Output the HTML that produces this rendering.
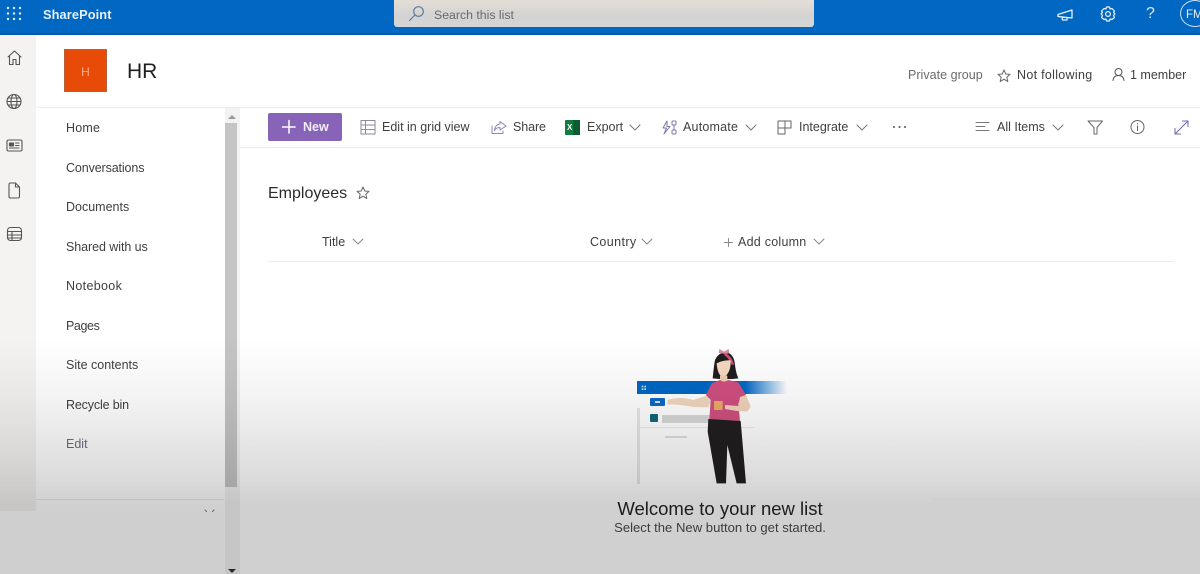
<!DOCTYPE html>
<html><head><meta charset="utf-8">
<style>
html,body{margin:0;padding:0;width:1200px;height:574px;overflow:hidden;background:#fff}
body{position:relative;font-family:"Liberation Sans",sans-serif;color:#3f3f3f;filter:blur(.35px)}
.t{position:absolute;white-space:nowrap;font-size:12.5px;line-height:16px}
.b{position:absolute}
svg{position:absolute;overflow:visible;fill:none;stroke-linecap:round;stroke-linejoin:round}
</style></head>
<body>
<div class="b" style="left:0;top:0;width:1200px;height:34px;background:#0067c2"></div>
<div class="b" style="left:0;top:33px;width:1200px;height:2px;background:#0058a8"></div>
<svg style="left:0;top:0" width="30" height="30" stroke="none"><g fill="#e4eefa"><circle cx="8" cy="8" r="1.2"/><circle cx="14" cy="8" r="1.2"/><circle cx="20" cy="8" r="1.2"/><circle cx="8" cy="13.500" r="1.2"/><circle cx="14" cy="13.500" r="1.2"/><circle cx="20" cy="13.500" r="1.2"/><circle cx="8" cy="19" r="1.200"/><circle cx="14" cy="19" r="1.200"/><circle cx="20" cy="19" r="1.200"/></g></svg>
<div class="t" style="left:43px;top:7px;color:#e8f1fb;font-weight:bold;font-size:12.800px;letter-spacing:.1px">SharePoint</div>
<div class="b" style="left:394px;top:0;width:420px;height:27px;background:linear-gradient(#e4ddd6,#d3d3d3 60%,#d6d6d6);border-radius:0 0 3px 3px"></div>
<svg style="left:408px;top:5px" width="18" height="18" stroke="#5b7f9f" stroke-width="1.200"><circle cx="10.500" cy="6.500" r="4.800"/><path d="M7 10 L1.500 15.500"/></svg>
<div class="t" style="left:434px;top:7px;color:#6a6a6a;font-size:12.300px">Search this list</div>
<svg style="left:1056px;top:6px" width="20" height="18" stroke="#e8f1fb" stroke-width="1.300"><path d="M2 8.500 L16 4 V12 L2 10.500Z M6 11 L6.500 14 H11 V12"/></svg>
<svg style="left:1100px;top:6px" width="16" height="16" stroke="#e8f1fb" stroke-width="1.200"><circle cx="8" cy="8" r="2.400"/><path d="M6.500 1 H9.500 L10 3 L12 2.500 L14.500 5 L13.500 6.500 L15 8 L13.500 9.500 L14.500 11.500 L12 13.500 L10 13 L9.500 15 H6.500 L6 13 L4 13.500 L1.500 11.500 L2.500 9.500 L1 8 L2.500 6.500 L1.500 5 L4 2.500 L6 3Z"/></svg>
<div class="t" style="left:1146px;top:4px;color:#dbe8f6;font-size:16px;line-height:20px">?</div>
<div class="b" style="left:1180px;top:0;width:30px;height:27px;border:1px solid #cfe1f4;border-radius:50%;box-sizing:border-box"></div>
<div class="t" style="left:1186px;top:7px;color:#e8f1fb;font-size:11.500px">FM</div>

<div class="b" style="left:0;top:35px;width:36px;height:539px;background:#f4f3f1"></div>
<svg style="left:6px;top:49px" width="18" height="18" stroke="#555" stroke-width="1.100"><path d="M2 8 L8.500 2 L15 8 M3.500 7 V15.500 H7 V10.500 H10 V15.500 H13.500 V7"/></svg>
<svg style="left:6px;top:93px" width="18" height="18" stroke="#555" stroke-width="1.100"><circle cx="8" cy="8.500" r="7"/><ellipse cx="8" cy="8.500" rx="3" ry="7"/><path d="M1 8.500 H15 M2 5 H14 M2 12 H14"/></svg>
<svg style="left:6px;top:138px" width="18" height="16" stroke="#555" stroke-width="1.100"><rect x="1" y="2" width="15" height="11" rx="1.500"/><rect x="3.500" y="5" width="4" height="3" fill="#555"/><path d="M9.500 5 H13 M9.500 7.500 H13 M3.500 10 H13"/></svg>
<svg style="left:7px;top:182px" width="16" height="18" stroke="#555" stroke-width="1.100"><path d="M2 2.500 Q2 1 3.500 1 H8.500 L12.500 5 V14.500 Q12.500 16 11 16 H3.500 Q2 16 2 14.500Z M8.500 1 V5 H12.500"/></svg>
<svg style="left:6px;top:226px" width="18" height="16" stroke="#555" stroke-width="1.100"><rect x="1.500" y="1.500" width="14" height="13" rx="3"/><path d="M1.500 5.500 H15.500 M1.500 9 H15.500 M1.500 12 H15.500 M6 5.500 V14.500"/></svg>

<div class="b" style="left:64px;top:49px;width:43px;height:43px;background:#e84a08;box-shadow:inset 0 0 0 1px #b8603a"></div>
<div class="t" style="left:64px;top:64px;width:43px;text-align:center;color:#f8b08c;font-size:12px">H</div>
<div class="t" style="left:127px;top:60px;color:#1f1f1f;font-size:21px;line-height:24px">HR</div>

<div class="t" style="left:908px;top:67px;color:#6b6b6b;font-size:12.500px;letter-spacing:.03px">Private group</div>
<svg style="left:997px;top:69px" width="14" height="14" stroke="#666" stroke-width="1"><path d="M7 1 L8.800 5 L13 5.400 L9.800 8.200 L10.800 12.600 L7 10.200 L3.200 12.600 L4.200 8.200 L1 5.400 L5.200 5Z"/></svg>
<div class="t" style="left:1017px;top:67px;letter-spacing:.3px">Not following</div>
<svg style="left:1112px;top:67px" width="14" height="15" stroke="#555" stroke-width="1"><circle cx="6.500" cy="5" r="3.500"/><path d="M1 13.500 Q1.500 8.500 6.500 8.500 Q11.500 8.500 12 13.500"/></svg>
<div class="t" style="left:1130px;top:67px">1 member</div>

<div class="b" style="left:36px;top:107px;width:1164px;height:1px;background:#ececec"></div>
<div class="b" style="left:240px;top:147px;width:960px;height:1px;background:#ececec"></div>

<div class="t" style="left:66px;top:120px;letter-spacing:.2px">Home</div>
<div class="t" style="left:66px;top:160px;letter-spacing:-.12px">Conversations</div>
<div class="t" style="left:66px;top:199px">Documents</div>
<div class="t" style="left:66px;top:239px;letter-spacing:-.07px">Shared with us</div>
<div class="t" style="left:66px;top:278px;letter-spacing:.33px">Notebook</div>
<div class="t" style="left:66px;top:318px;letter-spacing:-.4px">Pages</div>
<div class="t" style="left:66px;top:357px">Site contents</div>
<div class="t" style="left:66px;top:397px;letter-spacing:-.15px">Recycle bin</div>
<div class="t" style="left:66px;top:436px;color:#6f6a80">Edit</div>

<div class="b" style="left:225px;top:108px;width:15px;height:466px;background:#f2f2f2"></div>
<div class="b" style="left:225px;top:123px;width:12px;height:364px;background:#c4c4c4"></div>
<div class="b" style="left:228px;top:115px;width:0;height:0;border:4px solid transparent;border-top:0;border-bottom:4px solid #999"></div>
<div class="b" style="left:228px;top:569px;width:0;height:0;border:4px solid transparent;border-bottom:0;border-top:4px solid #333"></div>
<div class="b" style="left:36px;top:499px;width:188px;height:1px;background:#e8e8e8"></div>

<div class="b" style="left:268px;top:113px;width:74px;height:28px;background:#8764b8;border-radius:2px"></div>
<svg style="left:281px;top:119px" width="16" height="16" stroke="#fff" stroke-width="1.500"><path d="M8 1.500 V14 M1.500 8 H14"/></svg>
<div class="t" style="left:303px;top:119px;color:#f1ecf8;font-weight:bold;font-size:12.500px">New</div>

<svg style="left:360px;top:120px" width="16" height="15" stroke="#8a8aa0" stroke-width="1"><rect x="1" y="0.500" width="14" height="13.500"/><path d="M1 5 H15 M1 9.500 H15 M5.500 0.500 V14"/></svg>
<div class="t" style="left:382px;top:119px">Edit in grid view</div>
<svg style="left:491px;top:120px" width="16" height="15" stroke="#8f86b8" stroke-width="1"><path d="M9 1.500 L15 6 L9 10 V7.500 Q5 7.500 3.500 10.500 Q4 4.500 9 4Z M1 6 V13.500 H12 V11"/></svg>
<div class="t" style="left:513px;top:119px;letter-spacing:-.1px">Share</div>
<div class="b" style="left:565px;top:120px;width:15px;height:15px;background:#107c41;border-radius:1px"></div>
<div class="b" style="left:573px;top:120px;width:7px;height:15px;background:#0b5d31"></div>
<div class="t" style="left:567px;top:122px;color:#fff;font-size:8px;line-height:11px;font-weight:bold">X</div>
<div class="t" style="left:587px;top:119px">Export</div>
<svg style="left:629px;top:124px" width="12" height="8" stroke="#777" stroke-width="1"><path d="M1 1 L6 6 L11 1"/></svg>
<svg style="left:661px;top:120px" width="17" height="15" stroke="#7f77a8" stroke-width="1"><path d="M6 1 L2 8 H5.500 L3 14 L9 6.500 H6Z"/><rect x="11" y="1" width="4" height="4" rx="1"/><rect x="11" y="10" width="4" height="4" rx="1"/><path d="M13 5 V10"/></svg>
<div class="t" style="left:683px;top:119px;letter-spacing:.2px">Automate</div>
<svg style="left:745px;top:124px" width="12" height="8" stroke="#777" stroke-width="1"><path d="M1 1 L6 6 L11 1"/></svg>
<svg style="left:777px;top:120px" width="15" height="15" stroke="#666" stroke-width="1"><path d="M1 1 H14 V8 H8 V14 H1Z M8 1 V8 M1 8 H8"/></svg>
<div class="t" style="left:799px;top:119px">Integrate</div>
<svg style="left:856px;top:124px" width="12" height="8" stroke="#777" stroke-width="1"><path d="M1 1 L6 6 L11 1"/></svg>
<svg style="left:892px;top:125px" width="16" height="4" stroke="none"><g fill="#555"><circle cx="2" cy="2" r="1"/><circle cx="7.500" cy="2" r="1"/><circle cx="13" cy="2" r="1"/></g></svg>

<svg style="left:975px;top:121px" width="16" height="13" stroke="#777" stroke-width="1"><path d="M1 1.500 H14 M1 5.500 H10 M1 9.500 H14"/></svg>
<div class="t" style="left:997px;top:119px">All Items</div>
<svg style="left:1052px;top:124px" width="12" height="8" stroke="#777" stroke-width="1"><path d="M1 1 L6 6 L11 1"/></svg>
<svg style="left:1087px;top:120px" width="17" height="15" stroke="#666" stroke-width="1"><path d="M1 1 H15.500 L10 7.500 V14 H7 V7.500Z"/></svg>
<svg style="left:1130px;top:120px" width="15" height="15" stroke="#666" stroke-width="1"><circle cx="7.500" cy="7" r="6.500"/><path d="M7.500 6 V10.500 M7.500 3.500 V4"/></svg>
<svg style="left:1174px;top:120px" width="15" height="15" stroke="#6d6aa8" stroke-width="1"><path d="M1 14 L14 1 M8.500 1 H14 V6.500 M1 8.500 V14 H6.500"/></svg>

<div class="t" style="left:268px;top:184px;color:#2b2b2b;font-size:16px;line-height:20px">Employees</div>
<svg style="left:356px;top:186px" width="14" height="14" stroke="#666" stroke-width="1"><path d="M7 1 L8.800 5 L13 5.400 L9.800 8.200 L10.800 12.600 L7 10.200 L3.200 12.600 L4.200 8.200 L1 5.400 L5.200 5Z"/></svg>

<div class="t" style="left:322px;top:234px">Title</div>
<svg style="left:352px;top:238px" width="12" height="8" stroke="#888" stroke-width="1"><path d="M1 1 L6 6 L11 1"/></svg>
<div class="t" style="left:590px;top:234px;letter-spacing:.4px">Country</div>
<svg style="left:641px;top:238px" width="12" height="8" stroke="#888" stroke-width="1"><path d="M1 1 L6 6 L11 1"/></svg>
<svg style="left:724px;top:238px" width="10" height="10" stroke="#888" stroke-width="1"><path d="M4.500 .5 V8.500 M.5 4.500 H8.500"/></svg>
<div class="t" style="left:738px;top:234px;letter-spacing:.25px">Add column</div>
<svg style="left:813px;top:238px" width="12" height="8" stroke="#888" stroke-width="1"><path d="M1 1 L6 6 L11 1"/></svg>
<div class="b" style="left:268px;top:261px;width:905px;height:1px;background:#ececec"></div>

<!-- illustration -->
<div class="b" style="left:637px;top:381px;width:150px;height:13px;background:linear-gradient(90deg,#0067c4 0,#0067c4 72%,#7fb4e4 86%,rgba(255,255,255,0) 100%)"></div>
<div class="b" style="left:637px;top:408px;width:3px;height:76px;background:#e6e6e6"></div>
<div class="b" style="left:640px;top:427px;width:115px;height:1px;background:#ececec"></div>
<div class="b" style="left:650px;top:398px;width:15px;height:8px;background:#0a6ac4;border-radius:1px"></div>
<div class="b" style="left:655px;top:401px;width:5px;height:2px;background:#cfe4f7"></div>
<div class="b" style="left:650px;top:414px;width:8px;height:8px;background:#0b6a78;border-radius:1px"></div>
<div class="b" style="left:662px;top:415px;width:65px;height:8px;background:#d8d8d8"></div>
<div class="b" style="left:665px;top:436px;width:22px;height:2px;background:#dedede"></div>
<svg style="left:640px;top:345px" width="160" height="145" viewBox="0 0 480 435" stroke="none">
<g fill="#cfe0f2"><rect x="5" y="122" width="5" height="5"/><rect x="13" y="122" width="5" height="5"/><rect x="5" y="130" width="5" height="5"/><rect x="13" y="130" width="5" height="5"/></g>
<path d="M218 100 Q222 60 225 45 Q235 22 258 22 Q282 25 285 60 Q288 85 295 100 Q260 105 218 100Z" fill="#1f1c1e"/>
<path d="M236 24 L238 12 L252 20 L266 12 L268 24 L258 27Z" fill="#dd8aa5"/>
<path d="M256 24 Q276 34 282 58 L275 60 Q268 40 252 30Z" fill="#cf4f7a"/>
<path d="M230 55 Q250 45 272 46 Q273 85 250 98 Q232 90 230 55Z" fill="#f5d8c0"/>
<rect x="240" y="92" width="22" height="20" fill="#f1cdb1"/>
<path d="M82 165 Q120 153 160 165 L200 152 L212 168 L205 187 L160 186 Q120 178 82 178Z" fill="#f0d6bf"/>
<path d="M240 105 L215 115 L198 150 L212 165 L208 225 L300 228 L295 175 L318 150 L295 112 L265 105 Q252 115 240 105Z" fill="#cf4f80"/>
<path d="M300 156 L318 150 L332 185 L322 200 L290 198 L255 192 L255 180 L295 183Z" fill="#f0d2ba"/>
<rect x="222" y="168" width="26" height="27" fill="#e8ac66"/>
<path d="M205 222 L302 228 L318 415 H290 L262 300 L258 415 H230 L203 260Z" fill="#211e20"/>
</svg>

<div class="t" style="left:560px;top:498px;width:320px;text-align:center;color:#232323;font-size:18.500px;line-height:22px">Welcome to your new list</div>
<div class="t" style="left:560px;top:520px;width:320px;text-align:center;color:#4a4a4a;font-size:13.100px">Select the New button to get started.</div>

<!-- fade overlay -->
<div class="b" style="left:0;top:340px;width:1200px;height:234px;background:linear-gradient(rgba(60,60,60,0) 0,rgba(60,60,60,.07) 28%,rgba(60,60,60,.17) 55%,rgba(60,60,60,.24) 70%,rgba(60,60,60,.24) 100%);mix-blend-mode:multiply"></div>
<div class="b" style="left:0;top:511px;width:224px;height:63px;background:#cfcfcf"></div>
<div class="b" style="left:932px;top:498px;width:268px;height:76px;background:#d0d0d0"></div>
<svg style="left:204px;top:509px" width="12" height="4" stroke="#666" stroke-width="1"><path d="M1 1 L2.500 2.500 M10 1 L8.500 2.500"/></svg>
</body></html>
